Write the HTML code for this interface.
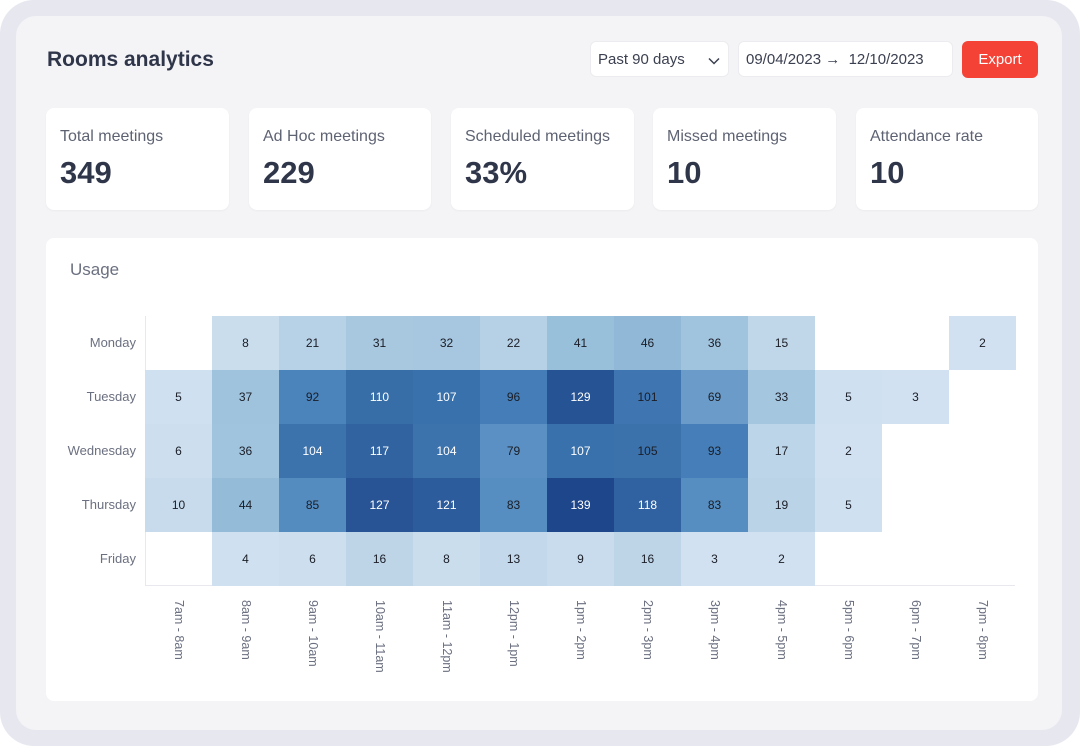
<!DOCTYPE html><html><head><meta charset="utf-8"><style>
*{margin:0;padding:0;box-sizing:border-box}
body{width:1080px;height:746px;background:#fff;font-family:"Liberation Sans",sans-serif;position:relative;overflow:hidden}
.frame{position:absolute;left:0;top:0;width:1080px;height:746px;background:#e7e7f0;border-radius:34px}
.panel{position:absolute;left:16px;top:16px;width:1046px;height:714px;background:#f4f4f7;border-radius:20px}
.a{position:absolute}
h1{position:absolute;left:47px;top:48px;font-size:21px;font-weight:bold;color:#30364a}
.box{position:absolute;background:#fff;border-radius:6px;border:1px solid #ececf0;font-size:15px;color:#3b4050}
.card{position:absolute;top:108px;height:102px;background:#fff;border-radius:8px;box-shadow:0 1px 2px rgba(0,0,0,.04)}
.card .l{position:absolute;left:14px;top:20px;font-size:16px;color:#5e6373}
.card .v{position:absolute;left:14px;top:47px;font-size:31px;font-weight:bold;color:#30364a}
.usage{position:absolute;left:46px;top:238px;width:992px;height:463px;background:#fff;border-radius:8px}
.grid{position:absolute;left:145px;top:316px}
.c{position:absolute;width:67px;height:54px;display:flex;align-items:center;justify-content:center;font-size:12px;color:#1a1d26}
.w{color:#fff}
.rl{position:absolute;width:120px;right:944px;text-align:right;font-size:13px;color:#6b7080}
.xl{position:absolute;top:600px;writing-mode:vertical-rl;font-size:12.5px;color:#6b7080;width:16px;white-space:nowrap}
</style></head><body>
<div class="frame"></div><div class="panel"></div>
<h1>Rooms analytics</h1>
<div class="box" style="left:590px;top:41px;width:139px;height:36px;padding:9px 0 0 7px">Past 90 days<svg style="position:absolute;right:8px;top:15px" width="12" height="8" viewBox="0 0 12 8"><path d="M1 1.5L6 6.5L11 1.5" stroke="#3b4050" stroke-width="1.5" fill="none"/></svg></div>
<div class="box" style="left:738px;top:41px;width:215px;height:36px;padding:9px 0 0 7px">09/04/2023 → &nbsp;12/10/2023</div>
<div class="a" style="left:962px;top:41px;width:76px;height:37px;background:#f44336;border-radius:6px;color:#fff;font-size:15px;text-align:center;line-height:37px">Export</div>
<div class="card" style="left:46px;width:183px"><div class="l">Total meetings</div><div class="v">349</div></div>
<div class="card" style="left:249px;width:182px"><div class="l">Ad Hoc meetings</div><div class="v">229</div></div>
<div class="card" style="left:451px;width:183px"><div class="l">Scheduled meetings</div><div class="v">33%</div></div>
<div class="card" style="left:653px;width:183px"><div class="l">Missed meetings</div><div class="v">10</div></div>
<div class="card" style="left:856px;width:182px"><div class="l">Attendance rate</div><div class="v">10</div></div>
<div class="usage"><div class="a" style="left:24px;top:22px;font-size:17px;color:#6b7080">Usage</div></div>
<div class="rl" style="top:335px">Monday</div>
<div class="rl" style="top:389px">Tuesday</div>
<div class="rl" style="top:443px">Wednesday</div>
<div class="rl" style="top:497px">Thursday</div>
<div class="rl" style="top:551px">Friday</div>
<div class="a" style="left:145px;top:316px;width:1px;height:270px;background:#e8e8ee"></div>
<div class="a" style="left:145px;top:585px;width:870px;height:1px;background:#e8e8ee"></div>
<div class="grid">
<div class="c" style="left:67px;top:0;background:rgb(202,221,237)">8</div>
<div class="c" style="left:134px;top:0;background:rgb(183,209,230)">21</div>
<div class="c" style="left:201px;top:0;background:rgb(168,200,224)">31</div>
<div class="c" style="left:268px;top:0;background:rgb(167,199,224)">32</div>
<div class="c" style="left:335px;top:0;background:rgb(182,208,230)">22</div>
<div class="c" style="left:402px;top:0;background:rgb(153,192,219)">41</div>
<div class="c" style="left:469px;top:0;background:rgb(145,185,215)">46</div>
<div class="c" style="left:536px;top:0;background:rgb(161,196,222)">36</div>
<div class="c" style="left:603px;top:0;background:rgb(192,214,233)">15</div>
<div class="c" style="left:804px;top:0;background:rgb(209,225,241)">2</div>

<div class="c" style="left:0;top:54px;background:rgb(207,224,240)">5</div>
<div class="c" style="left:67px;top:54px;background:rgb(159,195,221)">37</div>
<div class="c" style="left:134px;top:54px;background:rgb(75,131,187)">92</div>
<div class="c w" style="left:201px;top:54px;background:rgb(55,110,168)">110</div>
<div class="c w" style="left:268px;top:54px;background:rgb(57,113,172)">107</div>
<div class="c" style="left:335px;top:54px;background:rgb(68,125,183)">96</div>
<div class="c w" style="left:402px;top:54px;background:rgb(38,83,148)">129</div>
<div class="c" style="left:469px;top:54px;background:rgb(63,118,177)">101</div>
<div class="c" style="left:536px;top:54px;background:rgb(107,155,200)">69</div>
<div class="c" style="left:603px;top:54px;background:rgb(165,198,223)">33</div>
<div class="c" style="left:670px;top:54px;background:rgb(207,224,240)">5</div>
<div class="c" style="left:737px;top:54px;background:rgb(209,225,241)">3</div>

<div class="c" style="left:0;top:108px;background:rgb(205,223,239)">6</div>
<div class="c" style="left:67px;top:108px;background:rgb(161,196,222)">36</div>
<div class="c w" style="left:134px;top:108px;background:rgb(60,115,173)">104</div>
<div class="c w" style="left:201px;top:108px;background:rgb(49,99,160)">117</div>
<div class="c w" style="left:268px;top:108px;background:rgb(60,115,173)">104</div>
<div class="c" style="left:335px;top:108px;background:rgb(90,144,195)">79</div>
<div class="c w" style="left:402px;top:108px;background:rgb(57,113,172)">107</div>
<div class="c" style="left:469px;top:108px;background:rgb(59,114,172)">105</div>
<div class="c" style="left:536px;top:108px;background:rgb(69,126,184)">93</div>
<div class="c" style="left:603px;top:108px;background:rgb(189,213,232)">17</div>
<div class="c" style="left:670px;top:108px;background:rgb(209,225,241)">2</div>

<div class="c" style="left:0;top:162px;background:rgb(199,219,236)">10</div>
<div class="c" style="left:67px;top:162px;background:rgb(148,188,216)">44</div>
<div class="c" style="left:134px;top:162px;background:rgb(84,140,192)">85</div>
<div class="c w" style="left:201px;top:162px;background:rgb(40,84,150)">127</div>
<div class="c w" style="left:268px;top:162px;background:rgb(45,92,156)">121</div>
<div class="c" style="left:335px;top:162px;background:rgb(86,142,193)">83</div>
<div class="c w" style="left:402px;top:162px;background:rgb(30,70,138)">139</div>
<div class="c w" style="left:469px;top:162px;background:rgb(48,97,160)">118</div>
<div class="c" style="left:536px;top:162px;background:rgb(86,142,193)">83</div>
<div class="c" style="left:603px;top:162px;background:rgb(186,211,231)">19</div>
<div class="c" style="left:670px;top:162px;background:rgb(207,224,240)">5</div>

<div class="c" style="left:67px;top:216px;background:rgb(207,224,240)">4</div>
<div class="c" style="left:134px;top:216px;background:rgb(205,223,239)">6</div>
<div class="c" style="left:201px;top:216px;background:rgb(190,213,232)">16</div>
<div class="c" style="left:268px;top:216px;background:rgb(202,221,237)">8</div>
<div class="c" style="left:335px;top:216px;background:rgb(195,216,234)">13</div>
<div class="c" style="left:402px;top:216px;background:rgb(200,220,237)">9</div>
<div class="c" style="left:469px;top:216px;background:rgb(190,213,232)">16</div>
<div class="c" style="left:536px;top:216px;background:rgb(209,225,241)">3</div>
<div class="c" style="left:603px;top:216px;background:rgb(209,225,241)">2</div>
</div>
<div class="xl" style="left:170px">7am - 8am</div>
<div class="xl" style="left:237px">8am - 9am</div>
<div class="xl" style="left:304px">9am - 10am</div>
<div class="xl" style="left:371px">10am - 11am</div>
<div class="xl" style="left:438px">11am - 12pm</div>
<div class="xl" style="left:505px">12pm - 1pm</div>
<div class="xl" style="left:572px">1pm - 2pm</div>
<div class="xl" style="left:639px">2pm - 3pm</div>
<div class="xl" style="left:706px">3pm - 4pm</div>
<div class="xl" style="left:773px">4pm - 5pm</div>
<div class="xl" style="left:840px">5pm - 6pm</div>
<div class="xl" style="left:907px">6pm - 7pm</div>
<div class="xl" style="left:974px">7pm - 8pm</div>
</body></html>
